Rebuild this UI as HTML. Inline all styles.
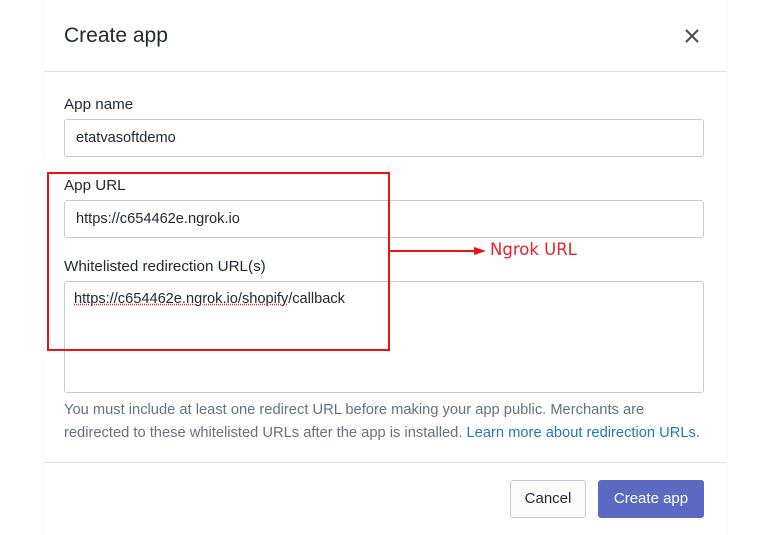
<!DOCTYPE html>
<html><head><meta charset="utf-8"><style>
body{margin:0;width:768px;height:535px;background:#fff;position:relative;overflow:hidden;font-family:"Liberation Sans",sans-serif;color:#212b36}
.a{position:absolute}
.lbl{font-size:15.2px;color:#212b36}
.inp{position:absolute;left:64px;width:640px;border:1px solid #c4cdd5;border-radius:3px;background:#fff;box-sizing:border-box;font-size:14.6px;padding-left:11px}
.hr{position:absolute;left:44px;width:682px;height:1px;background:#dfe3e8}
</style></head><body>
<div class="a" style="left:44px;top:0;width:682px;height:535px;background:#fff;box-shadow:0 0 3px rgba(0,0,0,0.06)"></div>
<div class="a" style="left:64px;top:24px;font-size:21px;color:#212b36">Create app</div>
<svg class="a" style="left:685px;top:29px" width="14" height="14" viewBox="0 0 14 14"><path d="M1 1L13 13M13 1L1 13" stroke="#454f5b" stroke-width="2"/></svg>
<div class="hr" style="top:71px"></div>
<div class="a lbl" style="left:64px;top:96px">App name</div>
<div class="inp" style="top:119px;height:38px;line-height:36px">etatvasoftdemo</div>
<div class="a lbl" style="left:64px;top:177px">App URL</div>
<div class="inp" style="top:200px;height:38px;line-height:36px">https://c654462e.ngrok.io</div>
<div class="a lbl" style="left:64px;top:258px">Whitelisted redirection URL(s)</div>
<div class="inp" style="top:281px;height:112px;padding-top:9px;padding-left:9px"><span style="text-decoration:underline dotted #e02020">https://c654462e.ngrok.io/shopify</span>/callback</div>
<div class="a" style="left:64px;top:399px;font-size:14.7px;line-height:23px;color:#637381;width:680px;white-space:nowrap">You must include at least one redirect URL before making your app public. Merchants are<br>redirected to these whitelisted URLs after the app is installed. <span style="color:#1e7bb8">Learn more about redirection URLs.</span></div>
<div class="hr" style="top:462px"></div>
<div class="a" style="left:510px;top:480px;width:76px;height:38px;border:1px solid #c4cdd5;border-radius:3px;box-sizing:border-box;background:#fbfbfb;text-align:center;line-height:36px;font-size:15px;color:#212b36">Cancel</div>
<div class="a" style="left:598px;top:480px;width:106px;height:38px;border-radius:3px;background:#5c6ac4;text-align:center;line-height:38px;font-size:15px;color:#fff">Create app</div>
<div class="a" style="left:47px;top:172px;width:343px;height:179px;border:2px solid #e8141a;box-sizing:border-box"></div>
<svg class="a" style="left:390px;top:243px" width="100" height="16"><path d="M0 8L88 8" stroke="#e8141a" stroke-width="2"/><path d="M84 4L96 8L84 12Z" fill="#e8141a"/></svg>
<div class="a" style="left:490px;top:240px;font-size:16.5px;color:#e3242b;font-family:'DejaVu Sans',sans-serif">Ngrok URL</div>
</body></html>
